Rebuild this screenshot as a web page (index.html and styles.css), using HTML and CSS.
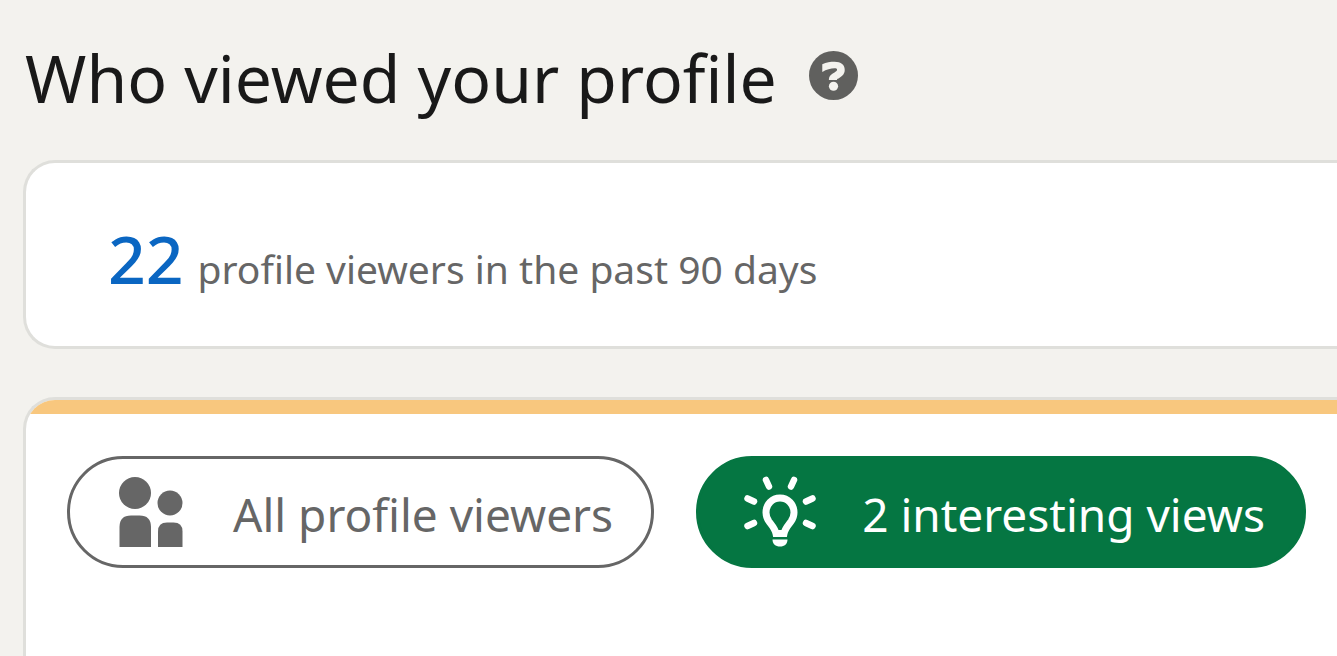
FILE: index.html
```html
<!DOCTYPE html>
<html lang="en">
<head>
    <meta charset="utf-8">
    <title>Who viewed your profile</title>
    <meta name="viewport" content="width=device-width, initial-scale=1">
    <link rel="stylesheet" href="styles.css">
</head>
<body>
    <header class="page-header">
        <h1>Who viewed your profile</h1>
        <button type="button" class="help" aria-label="Help">
            <svg viewBox="0 0 48 48" width="49" height="49" aria-hidden="true">
                <circle cx="24" cy="24" r="24" fill="#60605e"/>
                <path d="M13 13C17 11 21 10.500 25 10.500C31.500 10.500 35 13.500 35 18.500C35 23 31.500 25.500 27.500 27.500V28.500H19.500V27.500C19.500 24.500 22 22.500 25 21C27 20 27.500 19.200 27.500 18.200C27.500 17 26.500 16.800 25 16.800C21.500 16.800 17 18 13 20.500Z" fill="#f3f2ee"/>
                <circle cx="24" cy="34.500" r="4.500" fill="#f3f2ee"/>
            </svg>
        </button>
    </header>

    <main>
        <section class="card summary">
            <p><strong>22</strong> <span>profile viewers in the past 90 days</span></p>
        </section>

        <section class="card views">
            <div class="filters">
                <button type="button" class="pill">
                    <svg viewBox="0 0 72 72" width="72" height="72" fill="currentColor" aria-hidden="true">
                        <circle cx="20" cy="17" r="16"/>
                        <circle cx="55" cy="27" r="12.500"/>
                        <path d="M4.500 71V51Q4.500 39.500 16 39.500H24.500Q36 39.500 36 51V71Z"/>
                        <path d="M43 71V55.500Q43 46.500 52 46.500H58.500Q67.500 46.500 67.500 55.500V71Z"/>
                    </svg>
                    <span>All profile viewers</span>
                </button>
                <button type="button" class="pill selected">
                    <svg viewBox="0 0 72 72" width="72" height="72" fill="none" stroke="currentColor" aria-hidden="true">
                        <g stroke-width="6.500" stroke-linecap="round">
                            <path d="M22 4L25 10.500M50 4L47 10.500M3.500 22.500L10 25.500M68.500 22.500L62 25.500M3.500 50L10 47M68.500 50L62 47"/>
                        </g>
                        <path d="M32 57.500C31 52.500 28 49.500 25 45.500C23 42.700 22 40 22 36.500C22 28.500 28 22 36 22C44 22 50 28.500 50 36.500C50 40 49 42.700 47 45.500C44 49.500 41 52.500 40 57.500Z" stroke-width="7"/>
                        <path d="M28.500 63.500H43.500C43.500 68 40.500 70.500 36 70.500C31.500 70.500 28.500 68 28.500 63.500Z" fill="currentColor" stroke="none"/>
                    </svg>
                    <span>2 interesting views</span>
                </button>
            </div>
        </section>
    </main>
</body>
</html>
```

FILE: styles.css
```css
* { box-sizing: border-box; }

body {
    margin: 0;
    min-height: 100vh;
    display: flex;
    flex-direction: column;
    overflow-x: hidden;
    background: #f3f2ee;
    color: #191919;
    font-family: "Segoe UI", "Noto Sans", "Open Sans", sans-serif;
}

button { font-family: inherit; cursor: pointer; }
svg { display: block; flex: none; }

.page-header {
    display: flex;
    align-items: center;
    gap: 32px;
    height: 160px;
    padding: 0 25px 10px;
}
h1 {
    margin: 0;
    padding-top: 4px;
    font-size: 66px;
    font-weight: 400;
    line-height: 88px;
    white-space: nowrap;
}
.help { padding: 0; border: none; background: none; }

main {
    flex: 1;
    display: flex;
    flex-direction: column;
    gap: 48px;
    padding-left: 23px;
}

.card {
    background: #fff;
    border: 3px solid #dfdfdb;
    border-right: none;
}

.summary {
    border-radius: 32px 0 0 32px;
    padding: 51px 82px 44px;
}
.summary p {
    display: flex;
    align-items: baseline;
    gap: 14px;
    margin: 0;
    color: #666;
    font-size: 39px;
    line-height: 48px;
    white-space: nowrap;
}
.summary strong {
    color: #0a66c2;
    font-size: 66px;
    font-weight: 500;
    line-height: 88px;
}

.views {
    flex: 1;
    border-bottom: none;
    border-radius: 32px 0 0 0;
    overflow: hidden;
}
.views::before {
    content: '';
    display: block;
    height: 14px;
    background: #f8c77e;
}

.filters {
    display: flex;
    gap: 42px;
    padding: 42px 32px 42px 41px;
}
.pill {
    display: flex;
    align-items: center;
    gap: 46px;
    height: 112px;
    padding: 0 38px 0 45px;
    border: 3px solid #666;
    border-radius: 56px;
    background: #fff;
    color: #666;
    font-size: 46px;
    line-height: 64px;
    white-space: nowrap;
}
.pill span { padding-top: 4px; }
.pill.selected {
    border-color: #057642;
    background: #057642;
    color: #fff;
}
```
